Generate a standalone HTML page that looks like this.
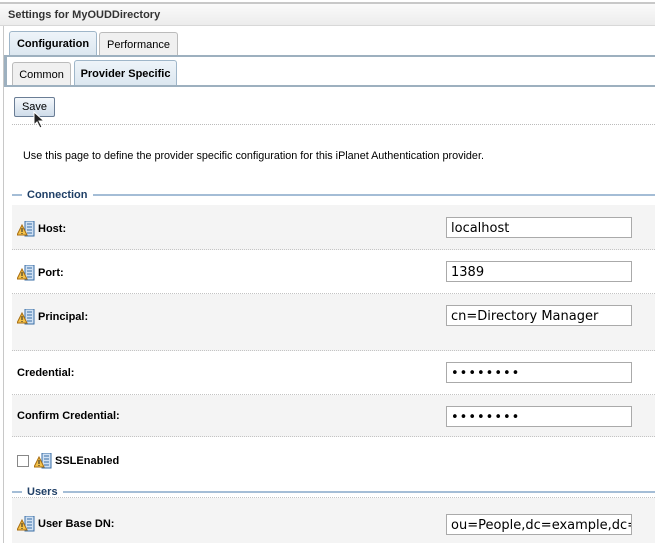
<!DOCTYPE html>
<html><head><style>
*{margin:0;padding:0;box-sizing:border-box}
body{width:655px;height:543px;overflow:hidden;background:#fff;font-family:"Liberation Sans",Arial,sans-serif;font-size:11px;color:#000;position:relative}
.a{position:absolute}
.hdr{left:0;top:2px;width:655px;height:24px;border-top:2px solid #c8c8c8;border-bottom:1px solid #d8d8d8;background:linear-gradient(#fafafa,#ececec)}
.tab{position:absolute;height:24px;border:1px solid #bbb;border-bottom:none;border-radius:3px 3px 0 0;background:#f0f0f0;font-size:11px;line-height:24px;text-align:center}
.sel{background:linear-gradient(#eef4f9,#dce7f0);border-color:#9fb6c9;font-weight:bold}
.hl{height:2px;background:#9db0bf}
.row{position:absolute;left:12px;width:643px;border-bottom:1px dotted #c4c4c4}
.g{background:#f4f4f4}
.lbl{position:absolute;left:5px;font-weight:bold;font-size:11px}
.inp{position:absolute;left:434px;width:186px;height:21px;border:1px solid #aaa;background:#fff;font-family:"DejaVu Sans",sans-serif;font-size:13px;line-height:21px;padding-left:4px;overflow:hidden;white-space:nowrap}
.ic{display:inline-block;vertical-align:middle;margin-right:3px}
.leg{position:absolute;left:12px;width:643px;height:2px;background:#a4bdd6}
.leg span{position:absolute;left:10px;top:-5px;background:#fff;padding:0 5px;color:#1f3f66;font-weight:bold;font-size:11px}
</style></head><body>
<div class="a hdr"></div>
<div class="a" style="left:8px;top:9px;font-weight:bold;font-size:11px;color:#333">Settings for MyOUDDirectory</div>
<div class="a" style="left:3px;top:26px;width:1px;height:517px;background:#c8c8c8"></div>
<div class="tab sel" style="left:9px;top:31px;width:88px">Configuration</div>
<div class="tab" style="left:99px;top:32px;width:79px;height:23px">Performance</div>
<div class="a hl" style="left:4px;top:55px;width:651px"></div>
<div class="a" style="left:4px;top:56px;width:3px;height:30px;background:#9db0bf"></div>
<div class="tab" style="left:12px;top:62px;width:59px;height:23px">Common</div>
<div class="tab sel" style="left:74px;top:60px;width:103px;height:25px;line-height:26px">Provider Specific</div>
<div class="a hl" style="left:4px;top:85px;width:651px"></div>
<div class="a" style="left:14px;top:97px;width:41px;height:20px;border:1px solid #6a7d95;border-radius:2px;background:linear-gradient(#f4f8fc,#cfdcea);font-size:11px;text-align:center;line-height:18px">Save</div>
<svg class="a" style="left:33px;top:111px" width="14" height="18" viewBox="0 0 14 18"><path d="M1 1 L1 14 L4 11 L7 17 L9 16 L6 10 L11 10 Z" fill="#222" stroke="#fff" stroke-width="1"/></svg>
<div class="a" style="left:12px;top:124px;width:643px;border-top:1px dotted #bbb"></div>
<div class="a" style="left:23px;top:150px;font-size:10.8px">Use this page to define the provider specific configuration for this iPlanet Authentication provider.</div>
<div class="leg" style="top:194px"><span>Connection</span></div>
<div class="row g" style="top:205px;height:45px"><div class="lbl" style="top:16px"><svg class="ic" width="18" height="16" viewBox="0 0 18 16"><rect x="8" y="0" width="9" height="15" fill="#cfe0f3" stroke="#3a6ea5"/><path d="M10 3h5M10 6h5M10 9h5M10 12h5" stroke="#3a6ea5"/><path d="M5 4 L10 14 L0 14 Z" fill="#f4c24a" stroke="#a86d10"/><path d="M5 7v4M5 12v1" stroke="#222"/></svg>Host:</div><div class="inp" style="top:12px">localhost</div></div>
<div class="row" style="top:250px;height:44px"><div class="lbl" style="top:15px"><svg class="ic" width="18" height="16" viewBox="0 0 18 16"><rect x="8" y="0" width="9" height="15" fill="#cfe0f3" stroke="#3a6ea5"/><path d="M10 3h5M10 6h5M10 9h5M10 12h5" stroke="#3a6ea5"/><path d="M5 4 L10 14 L0 14 Z" fill="#f4c24a" stroke="#a86d10"/><path d="M5 7v4M5 12v1" stroke="#222"/></svg>Port:</div><div class="inp" style="top:11px">1389</div></div>
<div class="row g" style="top:294px;height:57px"><div class="lbl" style="top:15px"><svg class="ic" width="18" height="16" viewBox="0 0 18 16"><rect x="8" y="0" width="9" height="15" fill="#cfe0f3" stroke="#3a6ea5"/><path d="M10 3h5M10 6h5M10 9h5M10 12h5" stroke="#3a6ea5"/><path d="M5 4 L10 14 L0 14 Z" fill="#f4c24a" stroke="#a86d10"/><path d="M5 7v4M5 12v1" stroke="#222"/></svg>Principal:</div><div class="inp" style="top:11px">cn=Directory Manager</div></div>
<div class="row" style="top:351px;height:44px"><div class="lbl" style="top:16px">Credential:</div><div class="inp" style="top:11px;letter-spacing:1px">••••••••</div></div>
<div class="row g" style="top:395px;height:42px"><div class="lbl" style="top:15px">Confirm Credential:</div><div class="inp" style="top:11px;letter-spacing:1px">••••••••</div></div>
<div class="row" style="top:437px;height:44px;border-bottom:none"><div class="lbl" style="top:16px"><span style="display:inline-block;width:12px;height:12px;border:1px solid #888;background:#fff;vertical-align:middle;margin-right:5px"></span><svg class="ic" width="18" height="16" viewBox="0 0 18 16"><rect x="8" y="0" width="9" height="15" fill="#cfe0f3" stroke="#3a6ea5"/><path d="M10 3h5M10 6h5M10 9h5M10 12h5" stroke="#3a6ea5"/><path d="M5 4 L10 14 L0 14 Z" fill="#f4c24a" stroke="#a86d10"/><path d="M5 7v4M5 12v1" stroke="#222"/></svg>SSLEnabled</div></div>
<div class="leg" style="top:491px"><span>Users</span></div>
<div class="a" style="left:12px;top:497px;width:643px;border-top:1px dotted #c4c4c4"></div>
<div class="row g" style="top:498px;height:45px;border-bottom:none"><div class="lbl" style="top:18px"><svg class="ic" width="18" height="16" viewBox="0 0 18 16"><rect x="8" y="0" width="9" height="15" fill="#cfe0f3" stroke="#3a6ea5"/><path d="M10 3h5M10 6h5M10 9h5M10 12h5" stroke="#3a6ea5"/><path d="M5 4 L10 14 L0 14 Z" fill="#f4c24a" stroke="#a86d10"/><path d="M5 7v4M5 12v1" stroke="#222"/></svg>User Base DN:</div><div class="inp" style="top:16px">ou=People,dc=example,dc=com</div></div>
</body></html>
